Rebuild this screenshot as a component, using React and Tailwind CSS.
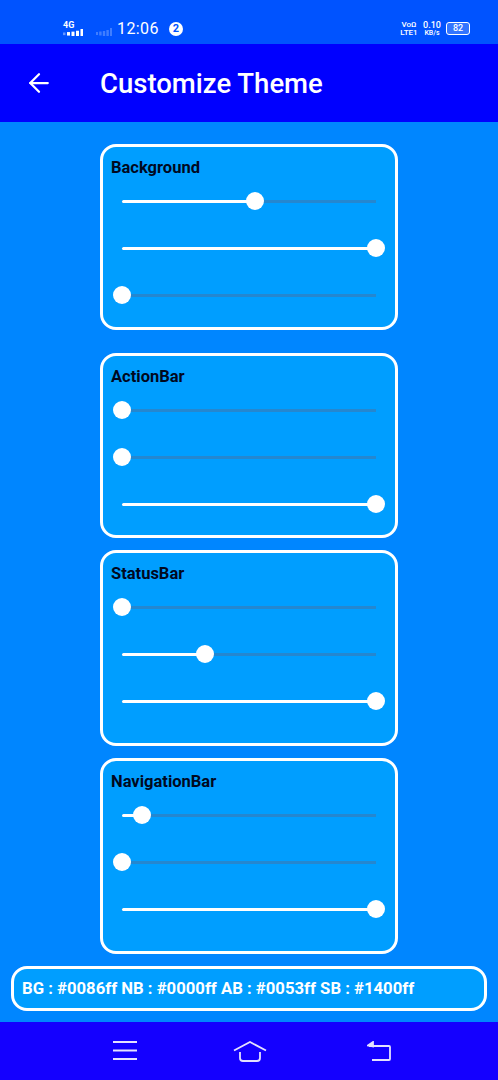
import React from 'react';
import { ArrowLeft } from 'lucide-react';

const sections = [
  { title: 'Background', values: [52.5, 100, 0], className: 'h-[186px] mb-[23px]' },
  { title: 'ActionBar', values: [0, 0, 100], className: 'h-[185px] mb-3' },
  { title: 'StatusBar', values: [0, 32.5, 100], className: 'h-[196px] mb-3' },
  { title: 'NavigationBar', values: [7.8, 0, 100], className: 'h-[196px] mb-3' },
];

function Bars({ faded }) {
  return (
    <svg width={faded ? 16 : 20} height="8" viewBox="0 0 20 8" preserveAspectRatio="none" className={faded ? 'opacity-25' : ''}>
      <rect x="0" y="4" width="2.5" height="3" fill="#ffffff" opacity={faded ? 1 : 0.4} />
      <rect x="4" y="3.5" width="3" height="4" fill="#ffffff" />
      <rect x="8.5" y="3" width="3" height="5" fill="#ffffff" />
      <rect x="13" y="2" width="3" height="6" fill="#ffffff" />
      <rect x="17.5" y="0" width="2.5" height="8" fill="#ffffff" />
    </svg>
  );
}

function StatusBar() {
  return (
    <div className="h-11 bg-[#0053ff] flex items-center text-white shrink-0 relative">
      <div className="flex items-center pl-[63px] pt-[13px]">
        <div className="w-[22px] h-[15px] flex flex-col">
          <span className="text-[9px] leading-[8px] font-bold">4G</span>
          <Bars />
        </div>
        <div className="ml-[11px] mt-[7px] flex"><Bars faded /></div>
        <span className="ml-[5px] text-[16px] leading-5 tracking-[0.4px]">12:06</span>
        <span className="ml-[10px] w-[14px] h-[14px] rounded-full bg-white text-[#0053ff] text-[11px] leading-[14px] font-bold text-center">2</span>
      </div>
      <div className="ml-auto flex items-center pr-[28px] pt-[13px]">
        <div className="flex flex-col items-center text-[8px] leading-[8px] font-medium w-[18px]">
          <span>VoΩ</span>
          <span>LTE1</span>
        </div>
        <div className="ml-[5px] flex flex-col items-center text-[8px] leading-[8px] font-medium w-[18px]">
          <span className="text-[9px]">0.10</span>
          <span className="text-[7px]">KB/s</span>
        </div>
        <div className="ml-[5px] w-[24px] h-[13px] rounded-[3px] border border-white bg-white/20 text-[9px] leading-[11px] font-medium text-center">82</div>
      </div>
    </div>
  );
}

function Slider({ value }) {
  return (
    <div className="h-[47px] flex items-center pt-[1px]">
      <div className="relative w-[254px] h-[3px] bg-[#2587cf]">
        <div className="h-full bg-white rounded-full" style={{ width: `${value}%` }} />
        <div
          className="absolute top-1/2 w-[18px] h-[18px] -ml-[9px] -mt-[9px] rounded-full bg-white"
          style={{ left: `${value}%` }}
        />
      </div>
    </div>
  );
}

function Section({ title, values, className }) {
  return (
    <div className={`w-[298px] rounded-[16px] border-[3px] border-white bg-[#009eff] px-[8px] pt-[11px] ${className}`}>
      <div className="text-[16.5px] leading-[20px] font-bold text-[#00091f] h-[19px]">{title}</div>
      <div className="pl-[11px]">
        {values.map((v, i) => <Slider key={i} value={v} />)}
      </div>
    </div>
  );
}

function NavBar() {
  return (
    <div className="h-[58px] bg-[#1400ff] shrink-0 flex items-start text-white pt-[19px]">
      <svg width="24" height="19" viewBox="0 0 24 19" className="ml-[113px]" fill="none" stroke="#e4e0ff" strokeWidth="2">
        <path d="M0 1h24M0 9.5h24M0 18h24" />
      </svg>
      <svg width="34" height="21" viewBox="0 0 34 21" className="ml-[96px]" fill="none" stroke="#e4e0ff" strokeWidth="1.8">
        <path d="M1 9.5 17 1l16 8.5" />
        <path d="M7 11v6q0 3 3 3h14q3 0 3-3v-6" />
      </svg>
      <svg width="24" height="20" viewBox="0 0 24 20" className="ml-[100px]" fill="none" stroke="#e4e0ff" strokeWidth="1.8">
        <path d="M2 5h20q1 0 1 1v12q0 1-1 1H5" />
        <path d="M6 1 1 4.500l5 1z" fill="#e4e0ff" />
      </svg>
    </div>
  );
}

export default function App() {
  return (
    <div className="w-[498px] h-[1080px] flex flex-col bg-[#0086ff] overflow-hidden font-['Roboto',sans-serif]">
      <StatusBar />
      <div className="h-[78px] bg-[#0000ff] flex items-center text-white shrink-0">
        <ArrowLeft className="ml-[24px] w-[30px] h-[30px]" strokeWidth={1.8} />
        <h1 className="ml-[46px] pt-[2px] text-[27.5px] font-medium">Customize Theme</h1>
      </div>
      <div className="flex-1 flex flex-col items-center pt-[22px]">
        {sections.map((s) => <Section key={s.title} {...s} />)}
        <div className="w-[476px] h-[45px] rounded-[16px] border-[3px] border-white bg-[#009eff] flex items-center px-2 text-white text-[16.7px] font-bold">
          BG : #0086ff NB : #0000ff AB : #0053ff SB : #1400ff
        </div>
      </div>
      <NavBar />
    </div>
  );
}
